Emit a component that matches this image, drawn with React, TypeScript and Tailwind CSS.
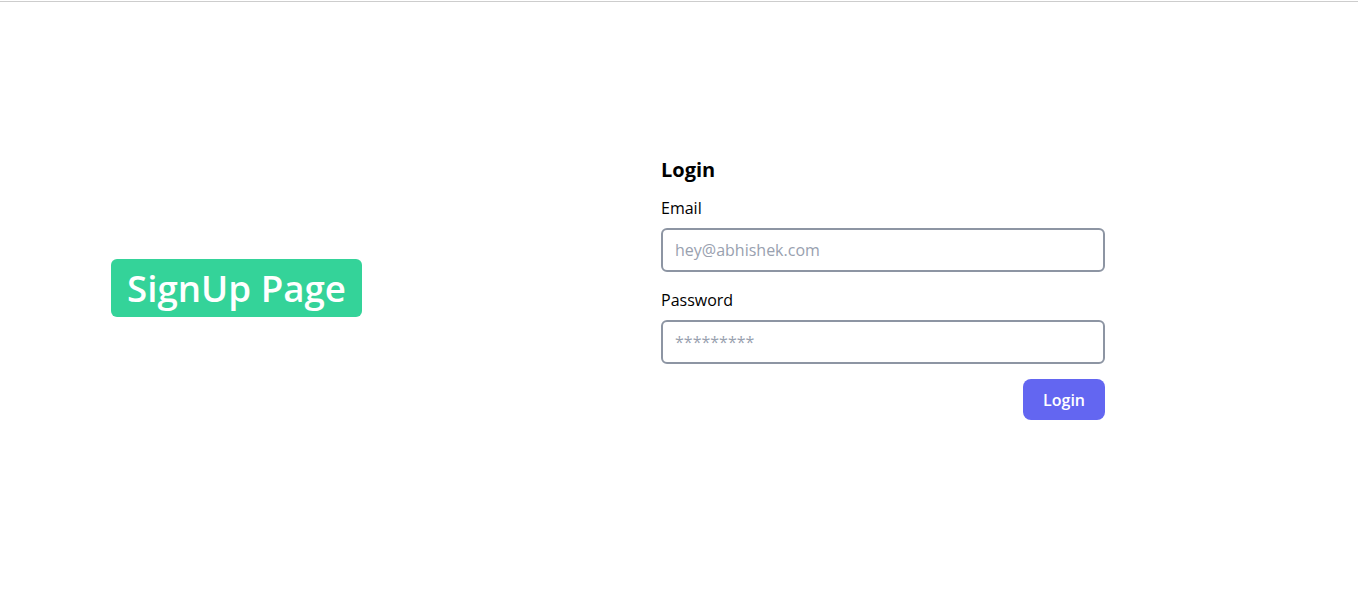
export default function App() {
  return (
    <div className="min-h-screen bg-white pt-px font-['Open_Sans',sans-serif] text-black">
      <div className="h-px bg-[#cdcdcd]" />
      <main className="flex h-[572px] items-center">
        <div className="w-[661px] pl-[111px]">
          <h1 className="inline-block rounded-md bg-[#34d399] px-4 py-1 text-[36.7px] font-semibold leading-[50px] text-white">
            SignUp Page
          </h1>
        </div>
        <form className="flex w-[444px] flex-col" onSubmit={(e) => e.preventDefault()}>
          <h2 className="text-xl font-bold leading-7">Login</h2>
          <label htmlFor="email" className="mt-3 text-base font-medium leading-6">
            Email
          </label>
          <input
            id="email"
            type="email"
            placeholder="hey@abhishek.com"
            className="mt-2 h-11 rounded-md border-2 border-[#8d95a3] px-3 text-base outline-none placeholder:text-gray-400"
          />
          <label htmlFor="password" className="mt-4 text-base font-medium leading-6">
            Password
          </label>
          <input
            id="password"
            type="password"
            placeholder="*********"
            className="mt-2 h-11 rounded-md border-2 border-[#8d95a3] px-3 text-base outline-none placeholder:text-gray-400"
          />
          <button
            type="submit"
            className="mt-[15px] h-[41px] self-end rounded-lg bg-[#6366f1] px-5 text-base font-semibold text-white"
          >
            Login
          </button>
        </form>
      </main>
    </div>
  )
}
